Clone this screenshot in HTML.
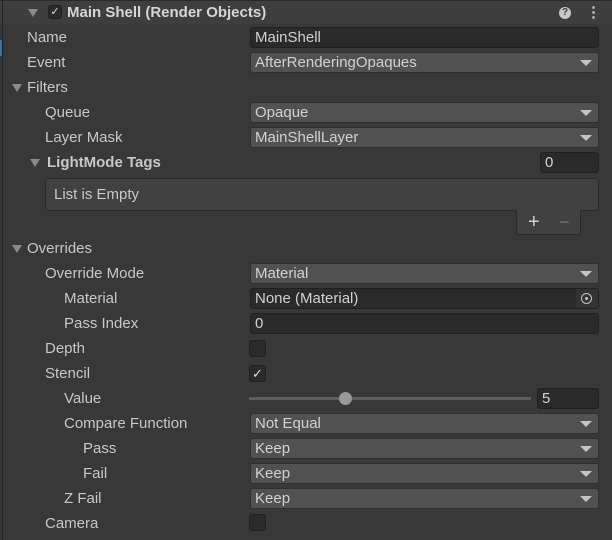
<!DOCTYPE html>
<html><head><style>
body{margin:0;width:612px;height:540px;background:#383838;position:relative;overflow:hidden;font-family:"Liberation Sans",sans-serif;font-size:15px;color:#c8c8c8}
.a{position:absolute}
.l{position:absolute;line-height:22px;white-space:nowrap}
.f{position:absolute;left:250px;width:349px;height:21px;border-radius:3px;box-sizing:border-box;line-height:20px;padding-left:4px;color:#d2d2d2}
.t{background:#2a2a2a;border:1px solid #212121}
.d{background:#515151;border:1px solid #303030}
.d:after{content:"";position:absolute;right:6px;top:7px;border-left:6px solid transparent;border-right:6px solid transparent;border-top:6px solid #c4c4c4}
.tri{position:absolute;width:0;height:0;border-left:5px solid transparent;border-right:5px solid transparent;border-top:8px solid #8a8a8a}
.cb{position:absolute;left:249px;width:17px;height:17px;background:#2a2a2a;border:1px solid #212121;border-radius:3px;box-sizing:border-box}
</style></head><body>
<div class="a" style="left:0;top:0;width:612px;height:24px;background:#3e3e3e;border-top:1px solid #2a2a2a;box-sizing:border-box"></div>
<div class="a" style="left:2px;top:0;width:1px;height:540px;background:#232323"></div>
<div class="a" style="left:0;top:40px;width:2px;height:16px;background:#3a72b0"></div>
<div class="tri" style="left:28px;top:9px"></div>
<div class="cb" style="left:48px;top:5px;width:14px;height:14px;color:#ddd;font-size:11px;line-height:13px;text-align:center">✓</div>
<div class="l" style="left:67px;top:2px;font-weight:bold;color:#d6d6d6">Main Shell (Render Objects)</div>
<div class="a" style="left:559px;top:7px;width:12px;height:12px;border-radius:50%;background:#c8c8c8;color:#3e3e3e;font-size:10px;font-weight:bold;line-height:12px;text-align:center">?</div>
<div class="l" style="left:586px;top:2px;font-weight:bold">⋮</div>

<div class="l" style="left:27px;top:27px">Name</div><div class="f t" style="top:27px">MainShell</div>
<div class="l" style="left:27px;top:52px">Event</div><div class="f d" style="top:52px">AfterRenderingOpaques</div>
<div class="tri" style="left:12px;top:84px"></div><div class="l" style="left:27px;top:77px">Filters</div>
<div class="l" style="left:45px;top:102px">Queue</div><div class="f d" style="top:102px">Opaque</div>
<div class="l" style="left:45px;top:127px">Layer Mask</div><div class="f d" style="top:127px">MainShellLayer</div>
<div class="tri" style="left:30px;top:159px"></div><div class="l" style="left:47px;top:152px;font-weight:bold">LightMode Tags</div>
<div class="f t" style="left:540px;width:59px;top:152px">0</div>
<div class="a" style="left:45px;top:178px;width:554px;height:33px;background:#414141;border:1px solid #2a2a2a;border-radius:3px;box-sizing:border-box"></div>
<div class="l" style="left:54px;top:184px">List is Empty</div>
<div class="a" style="left:516px;top:210px;width:65px;height:25px;background:#414141;border:1px solid #2a2a2a;border-top:none;border-radius:0 0 3px 3px;box-sizing:border-box"></div>
<div class="l" style="left:528px;top:211px;font-size:20px;color:#d0d0d0">+</div>
<div class="l" style="left:559px;top:211px;font-size:18px;color:#777">−</div>

<div class="tri" style="left:12px;top:245px"></div><div class="l" style="left:27px;top:238px">Overrides</div>
<div class="l" style="left:45px;top:263px">Override Mode</div><div class="f d" style="top:263px">Material</div>
<div class="l" style="left:64px;top:288px">Material</div><div class="f t" style="top:288px">None (Material)<div class="a" style="right:0;top:0;width:22px;height:19px;background:#333"><div class="a" style="left:5px;top:4px;width:11px;height:11px;border:1.5px solid #c4c4c4;border-radius:50%;box-sizing:border-box"></div><div class="a" style="left:9px;top:8px;width:3px;height:3px;background:#c4c4c4;border-radius:50%"></div></div></div>
<div class="l" style="left:64px;top:313px">Pass Index</div><div class="f t" style="top:313px">0</div>
<div class="l" style="left:45px;top:338px">Depth</div><div class="cb" style="top:340px"></div>
<div class="l" style="left:45px;top:363px">Stencil</div><div class="cb" style="top:365px;color:#e0e0e0;font-size:13px;line-height:15px;text-align:center">✓</div>
<div class="l" style="left:64px;top:388px">Value</div>
<div class="a" style="left:249px;top:397px;width:282px;height:3px;background:#5e5e5e"></div>
<div class="a" style="left:339px;top:392px;width:13px;height:13px;border-radius:50%;background:#999"></div>
<div class="f t" style="left:537px;width:62px;top:388px">5</div>
<div class="l" style="left:64px;top:413px">Compare Function</div><div class="f d" style="top:413px">Not Equal</div>
<div class="l" style="left:83px;top:438px">Pass</div><div class="f d" style="top:438px">Keep</div>
<div class="l" style="left:83px;top:463px">Fail</div><div class="f d" style="top:463px">Keep</div>
<div class="l" style="left:64px;top:488px">Z Fail</div><div class="f d" style="top:488px">Keep</div>
<div class="l" style="left:45px;top:513px">Camera</div><div class="cb" style="top:514px"></div>
</body></html>
